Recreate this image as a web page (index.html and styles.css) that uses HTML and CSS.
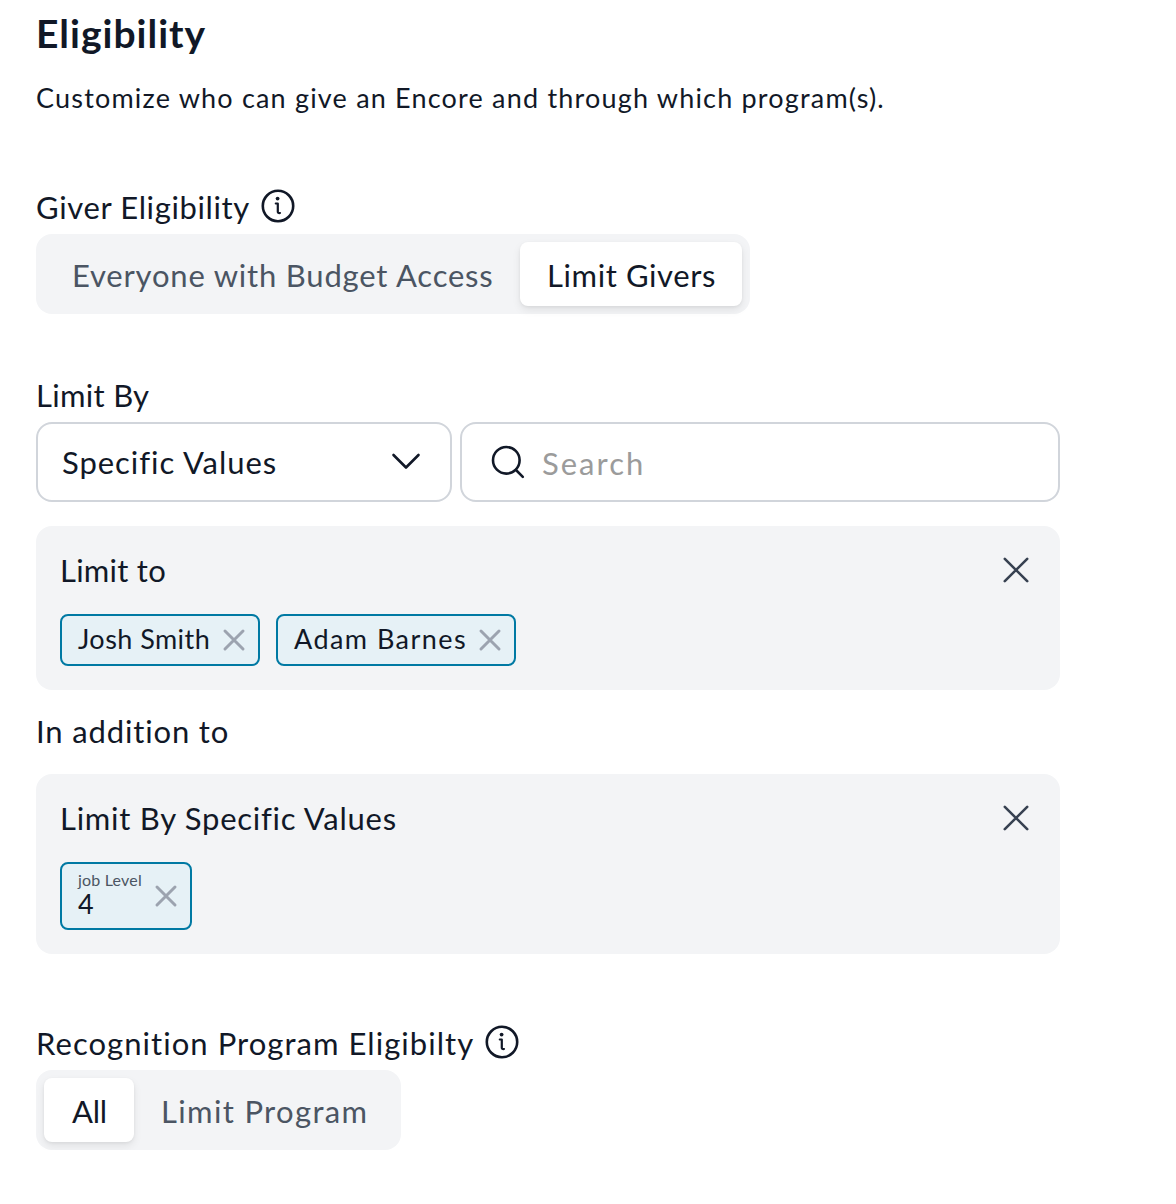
FILE: index.html
```html
<!DOCTYPE html>
<html lang="en">
<head>
    <meta charset="utf-8">
    <title>Eligibility</title>
    <link rel="stylesheet" href="styles.css">
</head>
<body>
    <div class="page">
        <h1 class="title">Eligibility</h1>
        <p class="subtitle">Customize who can give an Encore and through which program(s).</p>

        <div class="label giver-label">
            <span class="giver-text">Giver Eligibility</span>
            <svg class="info" viewBox="0 0 34 34">
                <circle cx="17" cy="17" r="15.2" />
                <path d="M14.8 14.500h2v8.300q0 1.500 2.200 1.200" />
                <circle class="dot" cx="16.6" cy="9.6" r="1.9" />
            </svg>
        </div>
        <div class="segment">
            <button type="button" class="seg seg-everyone">Everyone with Budget Access</button>
            <button type="button" class="seg seg-givers active">Limit Givers</button>
        </div>

        <div class="label limit-label">Limit By</div>
        <div class="fields">
            <div class="select">
                <span>Specific Values</span>
                <svg class="chevron" viewBox="0 0 30 18"><path d="M2.500 3 15 15.500 27.500 3" /></svg>
            </div>
            <div class="search">
                <svg class="magnifier" viewBox="0 0 36 36">
                    <circle cx="17.300" cy="16.300" r="13.300" />
                    <path d="M27 26l6.800 6.800" />
                </svg>
                <input type="text" class="search-input" placeholder="Search">
            </div>
        </div>

        <div class="card">
            <div class="card-head">
                <span class="limit-to">Limit to</span>
                <svg class="close" viewBox="0 0 28 28"><path d="M2.800 2.800l22.400 22.400M25.200 2.800l-22.400 22.400" /></svg>
            </div>
            <div class="chips">
                <div class="chip chip-josh">
                    <span>Josh Smith</span>
                    <svg class="remove" viewBox="0 0 24 24"><path d="M3 3l18 18M21 3l-18 18" /></svg>
                </div>
                <div class="chip chip-adam">
                    <span>Adam Barnes</span>
                    <svg class="remove" viewBox="0 0 24 24"><path d="M3 3l18 18M21 3l-18 18" /></svg>
                </div>
            </div>
        </div>

        <div class="between">In addition to</div>

        <div class="card">
            <div class="card-head">
                <span class="limit-values">Limit By Specific Values</span>
                <svg class="close" viewBox="0 0 28 28"><path d="M2.800 2.800l22.400 22.400M25.200 2.800l-22.400 22.400" /></svg>
            </div>
            <div class="chips">
                <div class="chip chip-level">
                    <div class="level">
                        <span class="level-name">job Level</span>
                        <span class="level-value">4</span>
                    </div>
                    <svg class="remove" viewBox="0 0 24 24"><path d="M3 3l18 18M21 3l-18 18" /></svg>
                </div>
            </div>
        </div>

        <div class="label program-label">
            <span class="program-text">Recognition Program Eligibilty</span>
            <svg class="info" viewBox="0 0 34 34">
                <circle cx="17" cy="17" r="15.2" />
                <path d="M14.8 14.500h2v8.300q0 1.500 2.200 1.200" />
                <circle class="dot" cx="16.6" cy="9.6" r="1.9" />
            </svg>
        </div>
        <div class="segment">
            <button type="button" class="seg seg-all active">All</button>
            <button type="button" class="seg seg-program">Limit Program</button>
        </div>
    </div>
</body>
</html>
```
FILE: styles.css
```css
* {
    margin: 0;
    padding: 0;
    box-sizing: border-box;
}

body {
    background: #fff;
    color: #111827;
    font-family: Lato, sans-serif;
    font-size: 31px;
    line-height: 40px;
}

.page {
    width: 1060px;
    padding: 9px 0 0 36px;
}

svg {
    display: block;
    flex: none;
    fill: none;
    stroke: #111827;
    stroke-width: 2.6;
    stroke-linecap: round;
    stroke-linejoin: round;
}

.title {
    font-size: 39px;
    line-height: 48px;
    font-weight: bold;
    letter-spacing: 1px;
}

.subtitle {
    margin-top: 21px;
    font-size: 27px;
    letter-spacing: 1.19px;
    white-space: nowrap;
}

.label {
    display: flex;
    height: 40px;
    margin-bottom: 7px;
    white-space: nowrap;
}

.giver-label {
    margin-top: 69px;
}

.giver-text {
    width: 225px;
    letter-spacing: .63px;
}

.limit-label {
    margin-top: 61px;
    letter-spacing: .3px;
}

.program-label {
    margin-top: 69px;
}

.program-text {
    width: 449px;
    letter-spacing: 1.05px;
}

.info {
    width: 34px;
    height: 34px;
    margin-top: 2px;
}

.info path {
    stroke-width: 2.2;
}

.info .dot {
    fill: #111827;
    stroke: none;
}

/* segmented buttons */
.segment {
    display: flex;
    width: fit-content;
    height: 80px;
    padding: 8px;
    background: #f3f4f6;
    border-radius: 16px;
}

.seg {
    height: 64px;
    padding: 2px 0 0 28px;
    border: 0;
    border-radius: 8px;
    background: none;
    color: #4b5563;
    font: inherit;
    text-align: left;
    white-space: nowrap;
}

.seg.active {
    background: #fff;
    color: #111827;
    box-shadow: 0 4px 8px rgba(0, 0, 0, .08), 0 1px 3px rgba(0, 0, 0, .06);
}

.seg-everyone {
    width: 476px;
    letter-spacing: .8px;
}

.seg-givers {
    width: 222px;
    padding-left: 27px;
    letter-spacing: .6px;
}

.seg-all {
    width: 90px;
    letter-spacing: -.2px;
}

.seg-program {
    width: 259px;
    padding-left: 27px;
    letter-spacing: 1.35px;
}

/* select and search */
.fields {
    display: flex;
    gap: 8px;
    margin-bottom: 24px;
}

.select,
.search {
    display: flex;
    align-items: center;
    height: 80px;
    border: 2px solid #d1d5db;
    border-radius: 16px;
}

.select {
    justify-content: space-between;
    width: 416px;
    padding: 0 29px 1px 24px;
    letter-spacing: .95px;
}

.chevron {
    width: 30px;
    height: 18px;
    margin-top: -1px;
}

.search {
    flex: 1;
    padding-left: 27px;
}

.magnifier {
    width: 36px;
    height: 36px;
    margin-top: -1px;
}

.search-input {
    width: 400px;
    height: 40px;
    margin: 2px 0 0 17px;
    border: 0;
    outline: 0;
    background: none;
    font: inherit;
    letter-spacing: 2px;
}

.search-input::placeholder {
    color: #9b9b9b;
}

/* cards */
.card {
    padding: 24px;
    background: #f3f4f6;
    border-radius: 16px;
}

.card-head {
    display: flex;
    justify-content: space-between;
    align-items: center;
    height: 40px;
    margin-bottom: 24px;
    padding-right: 6px;
}

.limit-to {
    letter-spacing: .25px;
}

.limit-values {
    letter-spacing: .74px;
}

.close {
    width: 28px;
    height: 28px;
    stroke: #374151;
}

.between {
    height: 40px;
    margin: 21px 0 23px;
    letter-spacing: .85px;
}

.chips {
    display: flex;
    gap: 16px;
}

.chip {
    display: flex;
    justify-content: space-between;
    align-items: center;
    height: 52px;
    padding: 0 12px 0 16px;
    background: #e6f1f6;
    border: 2px solid #0079a3;
    border-radius: 8px;
    font-size: 27px;
    white-space: nowrap;
}

.chip-josh,
.chip-adam {
    line-height: 38px;
}

.chip-josh > span,
.chip-adam > span {
    margin-top: -2px;
}

.chip-josh {
    width: 200px;
    letter-spacing: .45px;
}

.chip-adam {
    width: 240px;
    letter-spacing: 1.45px;
}

.chip-level {
    width: 132px;
    height: 68px;
}

.level {
    display: flex;
    flex-direction: column;
    height: 64px;
    padding-top: 6px;
}

.level-name {
    color: #4b5563;
    font-size: 16px;
    line-height: 20px;
    letter-spacing: .2px;
}

.level-value {
    line-height: 28px;
}

.remove {
    width: 24px;
    height: 24px;
    stroke: #9ca3af;
    stroke-width: 3;
}
```
